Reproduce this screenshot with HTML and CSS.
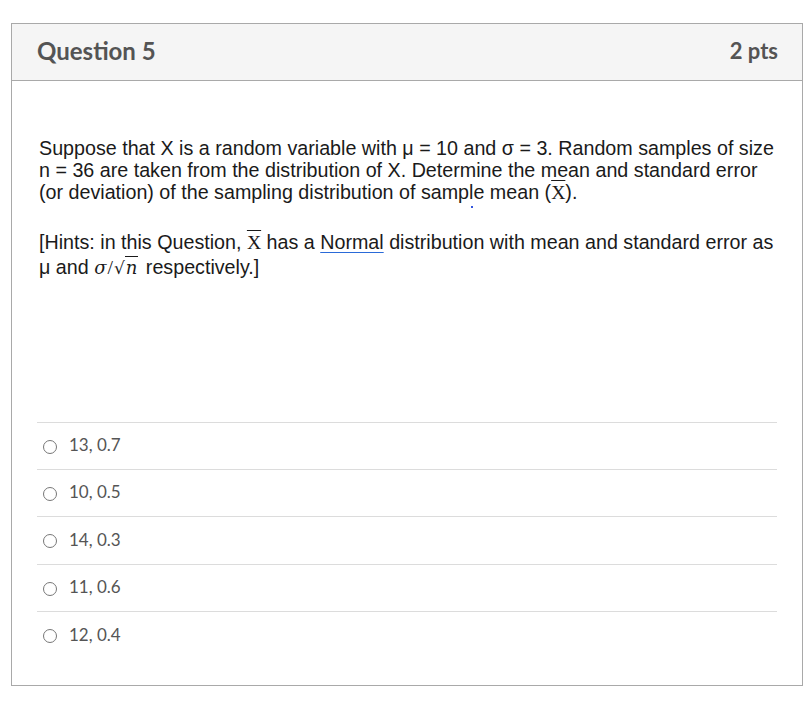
FILE: index.html
```html
<!DOCTYPE html>
<html>
<head>
<meta charset="utf-8">
<link rel="stylesheet" href="styles.css">
</head>
<body>
<div class="card">
  <div class="header">
    <span class="title">Question 5</span>
    <span class="pts">2 pts</span>
  </div>
  <div class="content">
    <p class="q">Suppose that X is a random variable with μ = 10 and σ = 3. Random samples of size n = 36 are taken from the distribution of X. Determine the mean and standard error (or deviation) of the sampling distribution of samp<span class="dotmark">l</span>e mean (<span class="xbar">X</span>).</p>
    <p class="q hint">[Hints: in this Question, <span class="xbar">X</span> has a <span class="link">Normal</span> distribution with mean and standard error as μ and <span class="math">σ</span><span class="slash">/</span><span class="sqrt">√</span><span class="rad math">n</span> respectively.]</p>
  </div>
  <div class="answers">
    <div class="answer"><span class="radio"></span><span class="label">13, 0.7</span></div>
    <div class="answer"><span class="radio"></span><span class="label">10, 0.5</span></div>
    <div class="answer"><span class="radio"></span><span class="label">14, 0.3</span></div>
    <div class="answer"><span class="radio"></span><span class="label">11, 0.6</span></div>
    <div class="answer"><span class="radio"></span><span class="label">12, 0.4</span></div>
  </div>
</div>
</body>
</html>
```

FILE: styles.css
```css
html, body {
  margin: 0;
  padding: 0;
  background: #ffffff;
}
.card {
  margin: 23px 0 0 11px;
  width: 790px;
  height: 661px;
  border: 1px solid #a9a9a9;
  background: #fff;
  box-sizing: content-box;
}
.header {
  height: 56px;
  background: #f5f5f5;
  border-bottom: 1px solid #a9a9a9;
  display: flex;
  align-items: center;
  justify-content: space-between;
  padding: 0 24px 0 25px;
  font-family: Lato, "Open Sans", sans-serif;
  font-weight: 700;
  color: #545454;
}
.title {
  font-size: 24px;
  margin-top: -3px;
}
.pts {
  font-size: 22px;
  margin-top: -3px;
}
.content {
  padding: 56px 24px 0 27px;
  height: 341px;
  box-sizing: border-box;
}
.q {
  margin: 0;
  font-family: "Liberation Sans", Arial, sans-serif;
  font-size: 19.7px;
  line-height: 22px;
  color: #1a1a1a;
}
.hint {
  margin-top: 27px;
  line-height: 25px;
}
.xbar {
  font-family: "Liberation Serif", "Times New Roman", serif;
  text-decoration: overline;
}
.link {
  text-decoration: underline;
  text-decoration-color: #2a6ad8;
  text-underline-offset: 3px;
}
.math {
  font-family: "DejaVu Serif", "Liberation Serif", serif;
  font-style: italic;
  font-size: 18px;
}
.slash {
  font-family: "Liberation Serif", serif;
  padding: 0 1px;
}
.sqrt {
  font-family: "DejaVu Serif", serif;
  font-size: 17px;
}
.rad {
  border-top: 1px solid #1a1a1a;
  padding: 0 1px;
  margin-right: 2px;
}
.dotmark {
  position: relative;
}
.dotmark::after {
  content: "";
  position: absolute;
  left: 2px;
  bottom: -5px;
  width: 2px;
  height: 2px;
  background: #3355dd;
}
.answers {
  margin: 0 25px 0 25px;
  font-family: Lato, "Open Sans", sans-serif;
  font-size: 17px;
  color: #555;
}
.answer {
  height: 47px;
  border-top: 1px solid #dcdcdc;
  display: flex;
  align-items: center;
  box-sizing: border-box;
  padding-bottom: 2px;
}
.answer:nth-child(3), .answer:nth-child(5) {
  height: 48px;
}
.radio {
  width: 14px;
  height: 14px;
  border: 1px solid #777;
  border-radius: 50%;
  box-sizing: border-box;
  margin: 3px 12px 0 6px;
}
.label {
  line-height: 20px;
}
```
